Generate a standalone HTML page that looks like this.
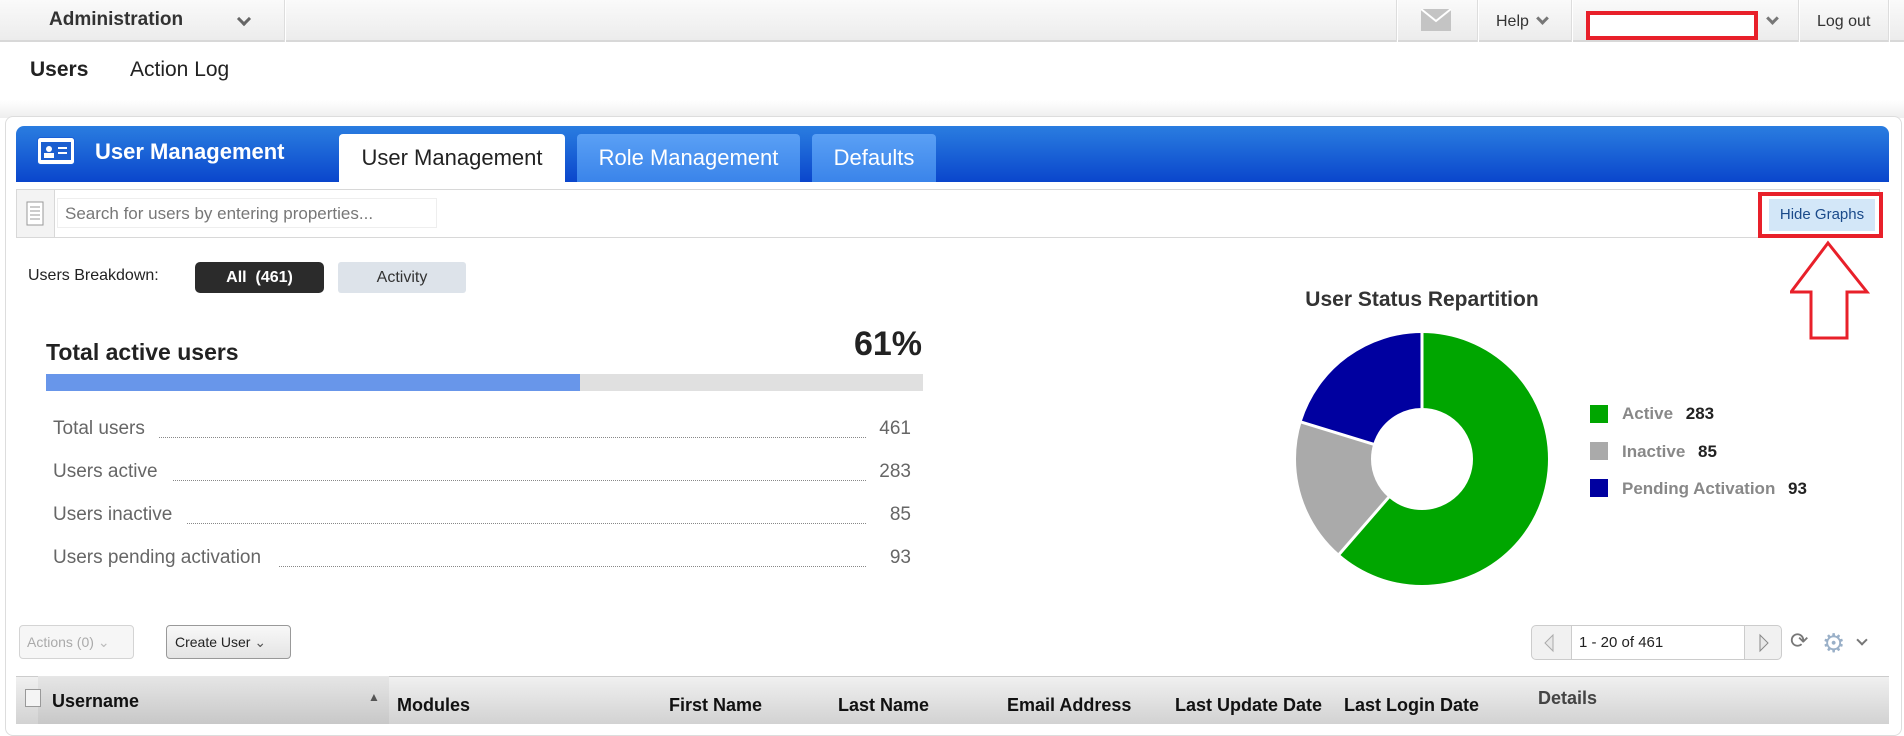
<!DOCTYPE html>
<html><head><meta charset="utf-8"><style>
*{box-sizing:border-box;margin:0;padding:0}
body{width:1904px;height:724px;overflow:hidden;background:#fff;font-family:"Liberation Sans",Arial,sans-serif;position:relative;color:#222}
.a{position:absolute}
.topbar{left:0;top:0;width:1904px;height:42px;background:linear-gradient(#fafafa,#ececec);border-bottom:2px solid #d8d8d8}
.sep{top:0;width:2px;height:42px;background:#fff;border-left:1px solid #ddd}
.chev{width:10px;height:10px;border-right:3px solid #777;border-bottom:3px solid #777;transform:rotate(45deg)}
.tab{top:134px;height:48px;border-radius:4px 4px 0 0;font-size:22px;line-height:48px;text-align:center}
.row{left:53px;width:858px;font-size:19px;color:#666;height:24px}
.row .d{position:absolute;bottom:4px;border-bottom:1px dotted #888}
.row .n{position:absolute;right:0;top:0}
.th{top:690px;font-size:18px;font-weight:bold;color:#111}
</style></head><body>
<div class="a topbar"></div>
<div class="a" style="left:49px;top:9px;font-size:19px;font-weight:bold;color:#333">Administration</div>
<div class="a chev" style="left:239px;top:14px;border-color:#666"></div>
<div class="a sep" style="left:284px"></div>
<div class="a sep" style="left:1396px"></div>
<svg class="a" style="left:1421px;top:9px" width="30" height="22"><rect width="30" height="22" fill="#c4c4c4"/><path d="M0 0 L15 12 L30 0" fill="none" stroke="#fff" stroke-width="2"/></svg>
<div class="a sep" style="left:1477px"></div>
<div class="a" style="left:1496px;top:13px;font-size:16px;color:#333">Help</div>
<div class="a chev" style="left:1538px;top:14px;width:9px;height:9px"></div>
<div class="a sep" style="left:1571px"></div>
<div class="a" style="left:1586px;top:11px;width:172px;height:29px;border:4px solid #e8202a;background:#fff"></div>
<div class="a chev" style="left:1768px;top:14px;width:9px;height:9px"></div>
<div class="a sep" style="left:1798px"></div>
<div class="a" style="left:1817px;top:13px;font-size:16px;color:#333">Log out</div>
<div class="a sep" style="left:1888px"></div>

<div class="a" style="left:30px;top:58px;font-size:21px;font-weight:bold;color:#222">Users</div>
<div class="a" style="left:130px;top:58px;font-size:21px;color:#222">Action Log</div>
<div class="a" style="left:0;top:100px;width:1904px;height:18px;background:linear-gradient(#fff,#eee)"></div>

<div class="a" style="left:5px;top:116px;width:1897px;height:620px;border:1px solid #ddd;border-radius:8px;background:#fff"></div>
<div class="a" style="left:16px;top:126px;width:1873px;height:56px;border-radius:8px 8px 0 0;background:linear-gradient(#2a7de0,#0a46cc)"></div>
<svg class="a" style="left:36px;top:136px" width="40" height="30"><rect x="1.5" y="1.5" width="37" height="27" rx="3" fill="#fff" stroke="#1a5fd6" stroke-width="1"/><rect x="5" y="6" width="30" height="18" fill="#1c5fd0"/><circle cx="13" cy="13" r="3" fill="#fff"/><rect x="8" y="17" width="10" height="5" fill="#fff"/><rect x="22" y="11" width="9" height="2" fill="#fff"/><rect x="22" y="16" width="9" height="2" fill="#fff"/></svg>
<div class="a" style="left:95px;top:139px;font-size:22px;font-weight:bold;color:#fff">User Management</div>
<div class="a tab" style="left:339px;width:226px;background:#fff;color:#222">User Management</div>
<div class="a tab" style="left:577px;width:223px;background:linear-gradient(#5aa0f5,#3a84ea);color:#fff">Role Management</div>
<div class="a tab" style="left:812px;width:124px;background:linear-gradient(#5aa0f5,#3a84ea);color:#fff">Defaults</div>

<div class="a" style="left:16px;top:189px;width:1864px;height:49px;border:1px solid #d8d8d8;background:#fff"></div>
<div class="a" style="left:16px;top:189px;width:39px;height:49px;border:1px solid #d8d8d8;background:#f3f3f3"></div>
<svg class="a" style="left:26px;top:201px" width="18" height="25"><rect x="1" y="1" width="16" height="23" fill="#fff" stroke="#999"/><path d="M4 6h10M4 10h10M4 14h10M4 18h10" stroke="#999"/></svg>
<div class="a" style="left:57px;top:198px;width:380px;height:30px;border:1px solid #eee;font-size:17px;color:#777;padding:5px 7px">Search for users by entering properties...</div>
<div class="a" style="left:1758px;top:192px;width:125px;height:46px;border:4px solid #e8202a"></div>
<div class="a" style="left:1769px;top:199px;width:106px;height:32px;background:#d3e7f8;font-size:15px;color:#1a4a8a;text-align:center;line-height:32px">Hide Graphs</div>
<svg class="a" style="left:1790px;top:240px" width="80" height="100"><path d="M38 3 L77 52 L57 52 L57 98 L21 98 L21 52 L1 52 Z" fill="#fff" stroke="#e8202a" stroke-width="3"/></svg>

<div class="a" style="left:28px;top:267px;font-size:16px;color:#222">Users Breakdown:</div>
<div class="a" style="left:195px;top:262px;width:129px;height:31px;border-radius:5px;background:#2b2b2b;color:#fff;font-size:16px;font-weight:bold;text-align:center;line-height:31px">All &nbsp;(461)</div>
<div class="a" style="left:338px;top:262px;width:128px;height:31px;border-radius:3px;background:#dde3ea;color:#333;font-size:16px;text-align:center;line-height:31px">Activity</div>

<div class="a" style="left:46px;top:339px;font-size:23px;font-weight:bold;color:#222">Total active users</div>
<div class="a" style="left:822px;top:325px;width:100px;text-align:right;font-size:34px;font-weight:bold;color:#222">61%</div>
<div class="a" style="left:46px;top:374px;width:877px;height:17px;background:#e0e0e0"></div>
<div class="a" style="left:46px;top:374px;width:534px;height:17px;background:#6896ea"></div>
<div class="a row" style="top:418px"><span>Total users</span><div class="d" style="left:106px;right:45px"></div><span class="n">461</span></div>
<div class="a row" style="top:461px"><span>Users active</span><div class="d" style="left:120px;right:45px"></div><span class="n">283</span></div>
<div class="a row" style="top:504px"><span>Users inactive</span><div class="d" style="left:134px;right:45px"></div><span class="n">85</span></div>
<div class="a row" style="top:547px"><span>Users pending activation</span><div class="d" style="left:226px;right:45px"></div><span class="n">93</span></div>

<div class="a" style="left:1222px;top:288px;width:400px;text-align:center;font-size:21px;font-weight:bold;color:#333">User Status Repartition</div>
<svg class="a" style="left:1290px;top:327px" width="264" height="264">
<g transform="translate(132,132) rotate(-90)">
<circle r="88.5" fill="none" stroke="#00a600" stroke-width="75" stroke-dasharray="341.4 600"/>
<circle r="88.5" fill="none" stroke="#aaaaaa" stroke-width="75" stroke-dasharray="0 341.4 102.5 600"/>
<circle r="88.5" fill="none" stroke="#0000a0" stroke-width="75" stroke-dasharray="0 443.9 112.2 600"/>
</g>
<g transform="translate(132,132)" stroke="#fff" stroke-width="3">
<line x1="0" y1="-50" x2="0" y2="-128"/>
<line x1="-32.8" y1="37.7" x2="-84" y2="96.6"/>
<line x1="-47.8" y1="-14.6" x2="-122.4" y2="-37.4"/>
</g>
</svg>
<div class="a" style="left:1590px;top:405px;width:18px;height:18px;background:#00a600"></div>
<div class="a" style="left:1590px;top:442px;width:18px;height:18px;background:#aaa"></div>
<div class="a" style="left:1590px;top:479px;width:18px;height:18px;background:#0000a0"></div>
<div class="a" style="left:1622px;top:404px;font-size:17px;font-weight:bold;color:#888">Active <span style="color:#222;margin-left:8px">283</span></div>
<div class="a" style="left:1622px;top:442px;font-size:17px;font-weight:bold;color:#888">Inactive <span style="color:#222;margin-left:8px">85</span></div>
<div class="a" style="left:1622px;top:479px;font-size:17px;font-weight:bold;color:#888">Pending Activation <span style="color:#222;margin-left:8px">93</span></div>

<div class="a" style="left:19px;top:625px;width:115px;height:34px;border:1px solid #d4d4d4;border-radius:4px;background:#f6f6f6;font-size:14px;color:#aaa;line-height:32px;padding-left:7px">Actions (0) <span style="color:#bbb">⌄</span></div>
<div class="a" style="left:166px;top:625px;width:125px;height:34px;border:1px solid #999;border-radius:4px;background:linear-gradient(#f8f8f8,#e4e4e4);font-size:14px;color:#222;line-height:32px;padding-left:8px">Create User <span style="color:#555">⌄</span></div>
<div class="a" style="left:1531px;top:625px;width:251px;height:35px;border:1px solid #ccc;border-radius:5px;background:#f1f1f1"></div>
<div class="a" style="left:1571px;top:625px;width:174px;height:35px;background:#fff;border:1px solid #ccc;font-size:15px;color:#222;line-height:33px;padding-left:7px">1 - 20 of 461</div>
<svg class="a" style="left:1542px;top:633px" width="14" height="20"><path d="M11 2 L3 10 L11 18 Z" fill="#e8e8e8" stroke="#aaa"/></svg>
<svg class="a" style="left:1757px;top:633px" width="14" height="20"><path d="M3 2 L11 10 L3 18 Z" fill="#e8e8e8" stroke="#888"/></svg>
<div class="a" style="left:1790px;top:628px;font-size:22px;color:#777">⟳</div>
<div class="a" style="left:1822px;top:628px;font-size:26px;color:#9ab0c8">⚙</div>
<div class="a chev" style="left:1858px;top:636px;width:8px;height:8px;border-width:2px"></div>

<div class="a" style="left:16px;top:676px;width:1873px;height:48px;border-top:1px solid #ccc;background:linear-gradient(#f0f0f0,#d2d2d2)"></div>
<div class="a" style="left:38px;top:676px;width:351px;height:48px;background:linear-gradient(#e6e6e6,#c8c8c8)"></div>
<div class="a" style="left:25px;top:689px;width:16px;height:18px;border:1px solid #999;background:#f4f4f4"></div>
<div class="a th" style="left:52px;top:691px">Username</div>
<div class="a" style="left:368px;top:690px;font-size:12px;color:#555">▲</div>
<div class="a th" style="left:397px;top:695px">Modules</div>
<div class="a th" style="left:669px;top:695px">First Name</div>
<div class="a th" style="left:838px;top:695px">Last Name</div>
<div class="a th" style="left:1007px;top:695px">Email Address</div>
<div class="a th" style="left:1175px;top:695px">Last Update Date</div>
<div class="a th" style="left:1344px;top:695px">Last Login Date</div>
<div class="a th" style="left:1538px;top:688px;color:#444">Details</div>
</body></html>
